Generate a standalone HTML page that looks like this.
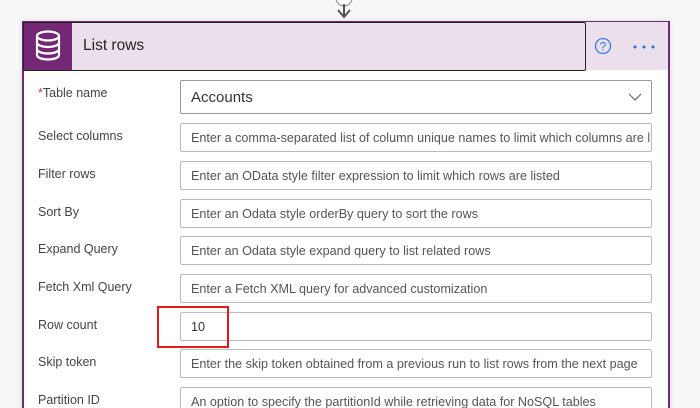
<!DOCTYPE html>
<html><head><style>
html,body{margin:0;width:700px;height:408px;overflow:hidden}
body{background:#f8f8f8;font-family:"Liberation Sans",sans-serif;position:relative}
.card{position:absolute;left:22px;top:21px;width:644px;height:400px;background:#fff;border-left:2px solid #742774;border-right:2px solid #742774;border-top:1px solid #742774;box-shadow:0 0 6px rgba(0,0,0,.12)}
.hdr{position:absolute;left:0;top:0;width:644px;height:48px;background:#ebdfeb}
.hbox{position:absolute;left:-1px;top:0;width:561px;height:47px;border:1px solid #222;border-radius:2px}
.ico{position:absolute;left:0;top:0;width:48px;height:48px;background:#742774}
.title{position:absolute;left:59px;top:15px;font-size:15.5px;color:#252423}
.lbl{position:absolute;left:14px;font-size:12.5px;color:#444}
.inp{position:absolute;left:156px;width:472px;height:29px;border:1px solid #bbb;border-radius:2px;font-size:12.6px;color:#555;line-height:29px;padding-left:10px;box-sizing:border-box;white-space:nowrap;overflow:hidden}
</style></head><body>
<svg style="position:absolute;left:332px;top:0" width="24" height="22"><circle cx="12" cy="-2" r="8" fill="#fff" stroke="#888"/><path d="M6 10 L12 17 L18 10 M12 4 V17" stroke="#555" stroke-width="2" fill="none"/></svg>
<div class="card">
 <div class="hdr">
  <div class="ico"><svg width="48" height="48"><g fill="none" stroke="#fff" stroke-width="2.2"><ellipse cx="24" cy="14" rx="11" ry="4.5"/><path d="M13 14v19c0 2.5 5 4.5 11 4.5s11-2 11-4.5V14M13 20.5c0 2.5 5 4.5 11 4.5s11-2 11-4.5M13 27c0 2.5 5 4.5 11 4.5s11-2 11-4.5"/></g></svg></div>
  <div class="hbox"></div>
  <div class="title">List rows</div>
  <svg style="position:absolute;left:570px;top:15px" width="18" height="18"><circle cx="9" cy="9" r="7.5" fill="none" stroke="#3a7af0" stroke-width="1.3"/><text x="9" y="13.5" font-size="12" text-anchor="middle" fill="#3a7af0" font-family="Liberation Sans">?</text></svg>
  <svg style="position:absolute;left:608px;top:22px" width="30" height="6"><circle cx="3" cy="3" r="1.5" fill="#2a6fd6"/><circle cx="12" cy="3" r="1.5" fill="#2a6fd6"/><circle cx="21" cy="3" r="1.5" fill="#2a6fd6"/></svg>
 </div>
 <div class="lbl" style="top:64px"><span style="color:#c4314b">*</span>Table name</div>
 <div class="inp" style="top:58px;height:34px;line-height:34px;border-color:#999;font-size:15px;color:#333">Accounts<svg style="position:absolute;right:9px;top:12px" width="14" height="9"><path d="M1 1l6 6 6-6" stroke="#666" fill="none" stroke-width="1.2"/></svg></div>
 <div class="lbl" style="top:107px">Select columns</div>
 <div class="inp" style="top:101px">Enter a comma-separated list of column unique names to limit which columns are listed</div>
 <div class="lbl" style="top:145px">Filter rows</div>
 <div class="inp" style="top:139px">Enter an OData style filter expression to limit which rows are listed</div>
 <div class="lbl" style="top:183px">Sort By</div>
 <div class="inp" style="top:177px">Enter an Odata style orderBy query to sort the rows</div>
 <div class="lbl" style="top:220px">Expand Query</div>
 <div class="inp" style="top:214px">Enter an Odata style expand query to list related rows</div>
 <div class="lbl" style="top:258px">Fetch Xml Query</div>
 <div class="inp" style="top:252px">Enter a Fetch XML query for advanced customization</div>
 <div class="lbl" style="top:296px">Row count</div>
 <div class="inp" style="top:290px;color:#333">10</div>
 <div class="lbl" style="top:333px">Skip token</div>
 <div class="inp" style="top:327px">Enter the skip token obtained from a previous run to list rows from the next page</div>
 <div class="lbl" style="top:371px">Partition ID</div>
 <div class="inp" style="top:365px">An option to specify the partitionId while retrieving data for NoSQL tables</div>
</div>
<div style="position:absolute;left:157px;top:306px;width:68px;height:38px;border:2px solid #e41a1a"></div>
</body></html>
